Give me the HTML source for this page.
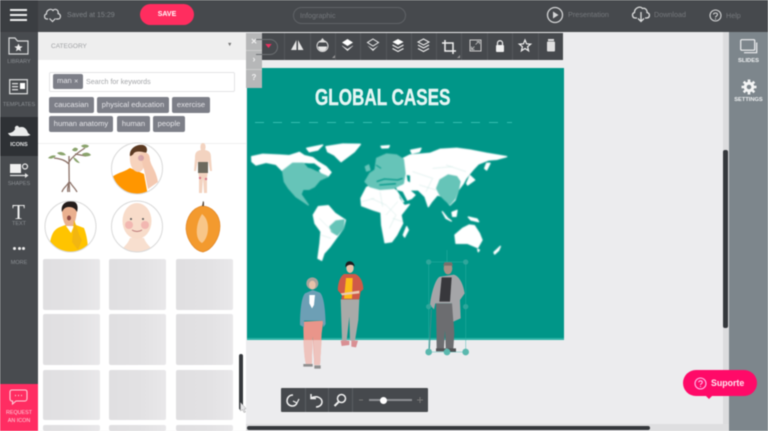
<!DOCTYPE html>
<html><head><meta charset="utf-8"><style>
html,body{margin:0;padding:0;width:768px;height:431px;overflow:hidden;background:#ececee}
#r{position:relative;width:768px;height:431px;overflow:hidden;filter:blur(.5px);font-family:"Liberation Sans",sans-serif}
#r div,#r svg{position:absolute}
.t{white-space:nowrap;line-height:1}
.lb{left:0;width:38px;text-align:center;font-size:5.500px;color:#8b8f93;white-space:nowrap;line-height:1}
.tag{background:#7d7f88;color:#e4e4e8;font-size:7.600px;height:16px;line-height:15px;text-align:center;border-radius:2px;white-space:nowrap}
.g{background:linear-gradient(90deg,#e0dfe1,#e3e2e4 60%,#e9e8ea);border-radius:2px;width:57px}
.sep{top:33px;width:1px;height:27px;background:#54575b}
</style></head><body><div id="r">

<!-- top bar -->
<div style="left:0;top:0;width:768px;height:32px;background:#46494d"></div>
<div style="left:0;top:0;width:38px;height:32px;background:#3b3e42"></div>
<div style="left:10px;top:9px;width:17px;height:2px;background:#eee"></div>
<div style="left:10px;top:14px;width:17px;height:2px;background:#eee"></div>
<div style="left:10px;top:19px;width:17px;height:2px;background:#eee"></div>
<svg style="left:43px;top:6px" width="19" height="17" viewBox="0 0 19 17" fill="none" stroke="#d8d9da" stroke-width="1.200"><path d="M5 13H4C1 13 .7 8.500 3.500 8 3 4 8 2 10 4.500 12 2 16 4 15 7.500 18.500 8.500 18 13 15 13H13"/><path d="M6.500 12.500 9.500 15.500 12.500 12.500"/></svg>
<div class="t" style="left:67px;top:11.500px;font-size:7.100px;color:#7f8387">Saved at 15:29</div>
<div class="t" style="left:140px;top:4px;width:54px;height:21px;background:#ff2d5f;border-radius:11px;color:#fff;font-size:7px;font-weight:bold;text-align:center;line-height:21px">SAVE</div>
<div class="t" style="left:293px;top:7px;width:111px;height:15px;border:1px solid #5f6266;border-radius:9px;color:#74777b;font-size:7.200px;line-height:15px;text-indent:6px">Infographic</div>
<svg style="left:546px;top:6px" width="18" height="18" viewBox="0 0 18 18"><circle cx="9" cy="9" r="7.500" fill="none" stroke="#d4d5d6" stroke-width="1.300"/><path d="M7 5.500 12.500 9 7 12.500Z" fill="#d4d5d6"/></svg>
<div class="t" style="left:568px;top:10.500px;font-size:7.300px;color:#75787c">Presentation</div>
<svg style="left:631px;top:5px" width="20" height="19" viewBox="0 0 20 19" fill="none" stroke="#dcdddd" stroke-width="1.300"><path d="M6 13H4.500C1 13 .5 8.500 3.500 7.500 3.500 3 9 .5 11.500 3.500 14 2.500 16.500 5 16 7.500 19.500 8.500 19 13 15.500 13H14"/><path d="M10 7V16M7 13.500 10 16.500 13 13.500"/></svg>
<div class="t" style="left:654px;top:10.500px;font-size:7.200px;color:#75787c">Download</div>
<svg style="left:709px;top:9px" width="13" height="13" viewBox="0 0 13 13" fill="none" stroke="#d4d5d6" stroke-width="1.100"><circle cx="6.500" cy="6.500" r="5.500"/><path d="M4.500 5.500C4.500 3.500 8.500 3.500 8.500 5.500 8.500 7 6.500 6.800 6.500 8.500"/><path d="M6.500 9.500V10.500"/></svg>
<div class="t" style="left:726px;top:11.500px;font-size:7.200px;color:#75787c">Help</div>

<!-- left sidebar -->
<div style="left:0;top:32px;width:38px;height:352px;background:#484b4f"></div>
<div style="left:0;top:117px;width:38px;height:39px;background:#2e3135"></div>
<svg style="left:8px;top:37px" width="21" height="18" viewBox="0 0 21 18"><path d="M1 1H7L9.500 4H20V17H1Z" fill="none" stroke="#d8d9da" stroke-width="1.200"/><path d="M10.500 6.500 11.700 9.300 14.700 9.500 12.300 11.400 13.100 14.300 10.500 12.700 7.900 14.300 8.700 11.400 6.300 9.500 9.300 9.300Z" fill="#eee"/></svg>
<div class="lb" style="top:59.500px">LIBRARY</div>
<svg style="left:9px;top:79px" width="19" height="16" viewBox="0 0 19 16"><rect x=".7" y=".7" width="17.600" height="14" fill="none" stroke="#e2e3e3" stroke-width="1.200"/><rect x="3" y="4" width="6" height="1.300" fill="#ddd"/><rect x="3" y="7" width="6" height="1.300" fill="#ddd"/><rect x="3" y="10" width="6" height="1.300" fill="#ddd"/><rect x="11" y="4" width="5" height="6" fill="#fff"/></svg>
<div class="lb" style="top:102.500px">TEMPLATES</div>
<svg style="left:7px;top:125px" width="24" height="13" viewBox="0 0 24 13"><path d="M1 8C4 8 6 7 7.500 5 9 3 12 2 15 2 18 2 20 5 21 8L23.500 10 20.500 11H5C3 11 2 10 1 8Z" fill="#eaebeb"/><circle cx="10" cy="3" r="2.200" fill="#eaebeb"/></svg>
<div class="lb" style="top:143px;color:#e2e3e4;font-weight:bold">ICONS</div>
<svg style="left:9px;top:163px" width="20" height="16" viewBox="0 0 20 16"><rect x="1" y="1" width="11" height="9" fill="#f0f0f0"/><circle cx="16" cy="3.500" r="2.500" fill="none" stroke="#e6e6e6" stroke-width="1.200"/><path d="M1 12.500H18" stroke="#e6e6e6" stroke-width="1.200"/><path d="M16 10 19.500 12.500 16 15Z" fill="#e6e6e6"/></svg>
<div class="lb" style="top:182px">SHAPES</div>
<div class="t" style="left:0;width:37px;top:200px;text-align:center;font:21px 'Liberation Serif',serif;color:#f0f0f0">T</div>
<div class="lb" style="top:222px">TEXT</div>
<div style="left:13px;top:247px;width:3px;height:3px;border-radius:2px;background:#eee"></div>
<div style="left:17.500px;top:247px;width:3px;height:3px;border-radius:2px;background:#eee"></div>
<div style="left:22px;top:247px;width:3px;height:3px;border-radius:2px;background:#eee"></div>
<div class="lb" style="top:261px">MORE</div>
<div style="left:0;top:384px;width:38px;height:47px;background:#ff2d62"></div>
<svg style="left:9px;top:389px" width="19" height="16" viewBox="0 0 19 16"><path d="M3 1H16C17.500 1 18 2 18 3V9.500C18 11 17 12 16 12H7L3.500 15V12H3C1.500 12 1 11 1 9.500V3C1 2 1.500 1 3 1Z" fill="none" stroke="#fbd3dc" stroke-width="1.100"/><path d="M6 6.500H7M9 6.500H10M12 6.500H13" stroke="#fbd3dc" stroke-width="1.200"/></svg>
<div class="lb" style="top:410.500px;color:#fbd3dc;font-size:5.400px">REQUEST</div>
<div class="lb" style="top:419px;color:#fbd3dc;font-size:5.400px">AN ICON</div>

<!-- panel -->
<div style="left:38px;top:33px;width:208px;height:398px;background:#fff"></div>
<div style="left:38px;top:33px;width:208px;height:27px;background:#eeeeee"></div>
<div class="t" style="left:51px;top:44px;font-size:6.500px;color:#a0a2a5">CATEGORY</div>
<div class="t" style="left:227px;top:43px;font-size:5.500px;color:#777">▼</div>
<div style="left:49px;top:72px;width:184px;height:18px;border:1px solid #e4e4e6;border-radius:2px;background:#fff"></div>
<div class="tag" style="left:53px;top:74px;width:30px;height:15px;text-align:left;text-indent:4px;line-height:14px">man <span style="font-size:5.500px">✕</span></div>
<div class="t" style="left:86px;top:78.500px;font-size:7.100px;color:#a3a5a8">Search for keywords</div>
<div class="tag" style="left:49px;top:97px;width:45px">caucasian</div>
<div class="tag" style="left:97px;top:97px;width:72px">physical education</div>
<div class="tag" style="left:172px;top:97px;width:38px">exercise</div>
<div class="tag" style="left:49px;top:116px;width:64px">human anatomy</div>
<div class="tag" style="left:117px;top:116px;width:33px">human</div>
<div class="tag" style="left:153px;top:116px;width:32px">people</div>
<div style="left:38px;top:143px;width:208px;height:1px;background:#efefef"></div>

<!-- tree -->
<svg style="left:45px;top:142px" width="50" height="52" viewBox="0 0 50 52" fill="none"><path d="M24.500 50C24 40 24 25 24 14M24 22C20 18 16 17 9 16M24 20C27 15 32 11 40 6M30 12 41 14M24 40C22 44 18 46 17 50M25 40C27 44 30 46 32 50M24 41C23 45 22 47 23 50" stroke="#8c7268" stroke-width="1.300"/><path d="M3 16C6 13 9 13 11 14 8 17 5 17 3 16ZM12 11C15 9 19 10 21 13 17 14 14 13 12 11ZM27 8C29 5 31 5 33 7 32 10 29 10 27 8ZM36 4C38 2 42 2 44 4 42 7 38 6 36 4ZM37 12C40 10 44 10 46 13 43 15 39 15 37 12ZM28 15C31 16 33 19 35 21 31 21 29 18 28 15Z" fill="#8aa36c"/></svg>

<!-- head circle 1 -->
<svg style="left:110px;top:142px" width="54" height="54" viewBox="0 0 54 54"><defs><clipPath id="c1"><circle cx="27" cy="26.500" r="25.500"/></clipPath></defs><circle cx="27" cy="26.500" r="25.500" fill="#fff"/><g clip-path="url(#c1)"><path d="M1 36C6 31 14 30 20 26L34 32 38 54H1Z" fill="#ff9600"/><path d="M20 10C19 20 21 29 28 30 34 30 35 22 36 14 34 8 24 6 20 10Z" fill="#f7d3bd"/><path d="M20 14C19 6 27 2 33 3 37 4 38 8 36 11 31 9 26 9 24 11 23 13 21 14 20 14Z" fill="#5c3a22"/><path d="M30 12C36 8 40 12 40 18 41 24 46 28 48 40L38 47C36 38 35 30 33 24Z" fill="#f4c9b1"/><circle cx="31" cy="16" r="3" fill="#c08aa0" opacity=".6"/></g><circle cx="27" cy="26.500" r="25.500" fill="none" stroke="#d9d9d9" stroke-width="1"/></svg>

<!-- body -->
<svg style="left:190px;top:142px" width="26" height="52" viewBox="0 0 26 52"><path d="M13 1C10 1 10 6 11 8 6 9 5 11 5 16L4 29 6 29 8 18 8 28 9 36 9 51 12 51 13 36 14 51 17 51 17 36 18 28 18 18 20 29 22 29 21 16C21 11 20 9 15 8 16 6 16 1 13 1Z" fill="#f3d3c0"/><rect x="8" y="20" width="10" height="11" fill="#6d6a5e"/><circle cx="10" cy="36" r="1.200" fill="#d9798a"/><circle cx="16" cy="37" r="1.200" fill="#d9798a"/></svg>

<!-- head circle 2 -->
<svg style="left:44px;top:200px" width="53" height="53" viewBox="0 0 53 53"><defs><clipPath id="c2"><circle cx="26.500" cy="26.500" r="25.500"/></clipPath></defs><circle cx="26.500" cy="26.500" r="25.500" fill="#fff"/><g clip-path="url(#c2)"><path d="M5 52C6 38 8 30 16 27L24 24 32 25 40 28C43 36 44 44 44 52Z" fill="#ffc400"/><path d="M18 8C18 18 20 26 25 28 29 28 32 22 33 10 30 3 20 3 18 8Z" fill="#eab08f"/><path d="M18 12C16 3 24 1 27 1 32 1 35 5 33 12 31 8 28 7 25 7 22 7 20 8 18 12Z" fill="#241d1b"/><path d="M22 26H30L27 33Z" fill="#fff"/><ellipse cx="25" cy="18" rx="2" ry="2.500" fill="#8c4a44"/><path d="M30 20C33 26 34 34 38 40L34 50 28 42Z" fill="#f2b611"/></g><circle cx="26.500" cy="26.500" r="25.500" fill="none" stroke="#d9d9d9" stroke-width="1"/></svg>

<!-- bald head -->
<svg style="left:110px;top:200px" width="54" height="53" viewBox="0 0 54 53"><defs><clipPath id="c3"><circle cx="27" cy="26.500" r="25.500"/></clipPath></defs><circle cx="27" cy="26.500" r="25.500" fill="#fff"/><g clip-path="url(#c3)"><path d="M10 52C14 46 18 44 20 38L34 38C36 44 40 46 44 52Z" fill="#f8dfcf"/><ellipse cx="27" cy="21" rx="14.500" ry="18" fill="#f8dcca"/><circle cx="19" cy="25" r="4" fill="#f0a6a6" opacity=".7"/><circle cx="35" cy="25" r="4" fill="#f0a6a6" opacity=".7"/><circle cx="21" cy="19" r="1" fill="#555"/><circle cx="33" cy="19" r="1" fill="#555"/><path d="M22 30C25 32 29 32 32 30" stroke="#b77" stroke-width="1" fill="none"/></g><circle cx="27" cy="26.500" r="25.500" fill="none" stroke="#d9d9d9" stroke-width="1"/></svg>

<!-- fruit -->
<svg style="left:184px;top:200px" width="38" height="54" viewBox="0 0 38 54"><path d="M18 6C8 8 2 18 2 29 3 41 11 51 19 52 28 50 36 38 36 26 36 15 28 6 18 6Z" fill="#f39a2e" stroke="#e0872a" stroke-width=".7"/><path d="M18 14C14 20 12 28 13 35 14 40 16 42 18 43 22 40 24 34 24 28 24 22 22 17 18 14Z" fill="#f8c689"/><path d="M18 6 19 1 20 2 20 6Z" fill="#5c4a3a"/></svg>

<!-- tiles -->
<div class="g" style="left:43px;top:259px;height:51px"></div><div class="g" style="left:109px;top:259px;height:51px"></div><div class="g" style="left:176px;top:259px;height:51px"></div>
<div class="g" style="left:43px;top:314px;height:51px"></div><div class="g" style="left:109px;top:314px;height:51px"></div><div class="g" style="left:176px;top:314px;height:51px"></div>
<div class="g" style="left:43px;top:370px;height:50px"></div><div class="g" style="left:109px;top:370px;height:50px"></div><div class="g" style="left:176px;top:370px;height:50px"></div>
<div class="g" style="left:43px;top:425px;height:6px"></div><div class="g" style="left:109px;top:425px;height:6px"></div><div class="g" style="left:176px;top:425px;height:6px"></div>
<div style="left:239px;top:354px;width:4px;height:56px;background:#35383c;border-radius:2px"></div>
<svg style="left:240px;top:402px" width="7" height="11" viewBox="0 0 7 11"><path d="M.5.5V9L2.500 7.500 4 10.500 5.500 10 4 7H6.500Z" fill="#e8e8ea" stroke="#999" stroke-width=".5"/></svg>

<!-- canvas -->
<div style="left:246px;top:60px;width:477px;height:366px;background:#ececee"></div>
<div style="left:247px;top:68px;width:317px;height:271px;background:#009688"></div>
<div style="left:247px;top:338px;width:317px;height:1.500px;background:#2db3a6"></div>
<div class="t" style="left:315px;top:86px;font-size:23.500px;font-weight:bold;color:#e4f5f3;transform-origin:0 0;transform:scaleX(.727);-webkit-text-stroke:.4px #e4f5f3">GLOBAL CASES</div>
<div style="left:255px;top:122px;width:257px;height:1px;background:repeating-linear-gradient(90deg,#35bdb0 0 9px,transparent 9px 18px)"></div>

<!-- map -->
<svg style="left:246px;top:135px;filter:blur(.4px)" width="270" height="140" viewBox="0 0 810 420">
<g fill="#fff" stroke="#fff" stroke-width="4" stroke-linejoin="round">
<path d="M17 65 50 58 100 60 130 62 160 52 175 62 200 68 215 80 240 95 255 112 245 125 225 112 205 85 175 82 140 85 110 108 90 88 60 82 30 90 18 80Z"/>
<path d="M240 35 290 27 343 28 325 50 285 80 265 60 245 50Z"/>
<path d="M182 40 230 30 215 45 190 50Z"/>
<path d="M405 34 430 32 427 38 408 39Z"/>
<path d="M494 46 525 40 520 50 498 55Z"/>
<path d="M472 70 492 60 527 57 552 55 582 43 632 40 672 45 722 55 782 65 752 73 727 75 697 87 682 103 672 115 660 130 652 145 637 165 627 195 612 210 604 200 592 185 574 180 557 200 547 215 537 185 517 165 492 165 472 150Z"/>
<path d="M722 85 732 85 722 105 716 100Z"/>
<path d="M452 157 472 150 507 180 497 190 472 200 462 180Z"/>
<path d="M345 190 362 157 375 152 402 165 440 160 455 170 460 190 475 212 490 208 465 240 470 265 452 300 437 320 417 323 407 270 405 232 382 225 347 212Z"/>
<path d="M202 240 217 215 247 212 267 235 298 255 292 280 270 310 252 335 234 355 227 376 216 370 222 325 225 290 207 265Z"/>
<path d="M627 300 650 280 670 270 685 272 700 295 708 315 695 338 665 325 630 325Z"/>
<path d="M744 352 763 334 758 346 746 357Z"/>
<path d="M472 300 482 275 487 285 476 306Z"/>
<path d="M589 230 605 250 616 258 600 250Z"/>
<path d="M618 232 633 226 630 244 620 244Z"/>
<path d="M667 246 693 252 698 260 675 255Z"/>
<path d="M672 122 686 135 665 150 662 145Z"/>
<path d="M695 343 700 345 697 350Z"/>
</g>
<g fill="#66c4b8" stroke="#66c4b8" stroke-width="4" stroke-linejoin="round">
<path d="M110 108 140 85 172 85 185 100 205 105 222 115 245 125 222 135 205 155 185 165 170 165 165 178 187 210 165 195 150 185 128 160 115 140Z"/>
<path d="M357 140 372 115 387 105 392 70 422 57 452 60 472 73 477 115 472 145 442 160 402 163 372 155Z"/>
<path d="M572 160 582 135 607 120 632 125 642 140 637 165 627 190 612 208 597 195 582 180Z"/>
<path d="M252 275 270 258 294 255 292 280 274 300 257 290Z"/>
<path d="M358 95 368 90 372 105 362 108Z"/>
</g>
<g fill="none" stroke="#c4e4e0" stroke-width="1.300"><path d="M375 190 420 210 450 240 430 280M402 170 410 215M455 200 420 240M347 200 385 190M220 250 260 290M225 300 255 310M500 110 560 130 540 170M600 90 660 110M440 250 470 260M520 150 570 165M560 100 620 95"/></g>
<g fill="none" stroke="#009688"><path d="M392 140 415 132 455 135 470 130M400 150 450 146" stroke-width="4"/><path d="M390 90 405 100" stroke-width="3"/></g>
<g fill="#009688"><path d="M175 85 205 85 225 100 215 110 195 100Z"/><path d="M172 165 205 165 215 180 190 195 175 185Z"/><path d="M452 165 470 170 488 205 475 200Z"/><path d="M482 120 492 122 492 142 485 138Z"/></g>
</svg>

<!-- people -->
<svg style="left:270px;top:250px" width="210" height="181" viewBox="0 0 630 543">
<path d="M100 215 C100 280 105 330 108 342 L125 342 L128 260 L133 345 L150 345 L155 250 L160 212Z" fill="#e9958a"/>
<path d="M100 270 C102 310 105 335 108 342 L125 342 L128 270ZM130 270 133 345 150 345 155 270Z" fill="#eec3bd"/>
<path d="M100 342H128V350H100ZM133 346H152V356H133Z" fill="#8f8f8f"/>
<path d="M105 130C95 140 90 180 90 225L102 232 102 212 158 212 160 232 167 222C166 180 162 140 150 128L128 120Z" fill="#6d9fb5"/>
<path d="M118 135 135 135 132 165 126 175 118 160Z" fill="#fff"/>
<circle cx="127" cy="100" r="18" fill="#a8a39c"/><ellipse cx="127" cy="105" rx="10" ry="13" fill="#e8c2a9"/>
<path d="M212 148 268 148 265 210 255 272 240 272 238 200 230 272 216 272Z" fill="#a9aaa8"/>
<path d="M212 272H238V285L215 288ZM244 272H264L258 292 244 290Z" fill="#d98f93"/>
<path d="M222 72C208 80 202 110 204 122L216 135 214 148 268 148 272 125 280 118C280 95 270 78 256 72Z" fill="#cf5a48"/>
<path d="M228 84H248L246 146H222Z" fill="#fdbb18"/>
<path d="M212 130 268 122 268 130 216 136Z" fill="#eccab0"/>
<ellipse cx="240" cy="54" rx="11" ry="15" fill="#e8c2a9"/><path d="M227 52C222 30 252 26 254 50 248 42 234 42 227 52Z" fill="#1e1c1f"/>
<path d="M498 160 548 160 553 250 550 296 527 296 525 240 522 296 500 296Z" fill="#6c6d70"/>
<path d="M498 295 H528 V304 H498ZM532 295 H558 V306 H532Z" fill="#525355"/>
<path d="M510 80C495 85 482 140 480 165L492 178 496 160 546 160 550 215 572 205 570 150 584 130C580 105 570 80 552 74Z" fill="#a5a5a8"/>
<path d="M515 82H545L540 155H508Z" fill="#38383c"/>
<ellipse cx="534" cy="55" rx="13" ry="18" fill="#a99085"/><path d="M519 47H549L545 36H524Z" fill="#77706c"/>
<path d="M484 178 478 300" stroke="#3f8f8d" stroke-width="3" fill="none"/>
<rect x="476" y="36" width="111" height="270" fill="none" stroke="#36b5aa" stroke-width="1.200"/>
<path d="M531 0V36" stroke="#36b5aa" stroke-width="1.200"/>
<g fill="#2fa69b"><circle cx="476" cy="36" r="8"/><circle cx="587" cy="36" r="8"/><circle cx="476" cy="170" r="8"/><circle cx="587" cy="170" r="8"/></g>
<g fill="#5ab8ae"><circle cx="476" cy="306" r="10"/><circle cx="531" cy="306" r="10"/><circle cx="587" cy="306" r="10"/></g>
</svg>

<!-- gray small column -->
<div style="left:246px;top:33px;width:16px;height:55px;background:#b6b7b8"></div>
<div class="t" style="left:246px;width:16px;text-align:center;top:38px;font-size:8px;color:#f0f0f0;font-weight:bold">✕</div>
<div style="left:246px;top:50px;width:16px;height:1px;background:#ccc"></div>
<div class="t" style="left:246px;width:16px;text-align:center;top:55px;font-size:9px;color:#f0f0f0;font-weight:bold">›</div>
<div style="left:246px;top:69px;width:16px;height:1px;background:#ccc"></div>
<div class="t" style="left:246px;width:16px;text-align:center;top:74px;font-size:8px;color:#f0f0f0;font-weight:bold">?</div>

<!-- toolbar -->
<div style="left:262px;top:33px;width:301px;height:27px;background:#46494d"></div>
<div style="left:256px;top:39px;width:21px;height:14px;border:1px solid #6c6f72;border-radius:0 8px 8px 0;border-left:0"></div>
<svg style="left:265px;top:44px" width="7" height="4" viewBox="0 0 8 5"><path d="M0 0H8L4 5Z" fill="#ec2f5f"/></svg>
<div class="sep" style="left:284px"></div><div class="sep" style="left:310px"></div><div class="sep" style="left:335px"></div><div class="sep" style="left:360px"></div><div class="sep" style="left:386px"></div><div class="sep" style="left:411px"></div><div class="sep" style="left:436px"></div><div class="sep" style="left:461px"></div><div class="sep" style="left:487px"></div><div class="sep" style="left:512px"></div><div class="sep" style="left:538px"></div>
<svg style="left:262px;top:33px" width="301" height="27" viewBox="0 0 301 27" fill="none">
<path d="M29 17 34.500 7V17ZM36 7 41.500 17H36Z" fill="#e6e6e6"/>
<circle cx="60.500" cy="13" r="5.500" stroke="#dcdcdc"/><path d="M60.500 5 57 9.500H64Z" fill="#dcdcdc"/><path d="M56 13.500H65A4.500 4.500 0 0 1 56 13.500Z" fill="#e6e6e6"/>
<path d="M85.500 6 91 9.500 85.500 13 80 9.500Z" fill="#fff"/><path d="M80 12.500 85.500 16 91 12.500 91 13 85.500 18 80 13Z" fill="#e6e6e6"/>
<path d="M111 6 116.500 9.500 111 13 105.500 9.500Z" stroke="#eee"/><path d="M105.500 12.500 111 16 116.500 12.500 111 18Z" fill="#e6e6e6"/>
<path d="M136 6 141.500 9 136 12 130.500 9Z" fill="#fff"/><path d="M130.500 12 136 15 141.500 12M130.500 15.500 136 18.500 141.500 15.500" stroke="#eee" stroke-width="1.200"/>
<path d="M161.500 6 167 9 161.500 12 156 9Z" stroke="#eee"/><path d="M156 12 161.500 15 167 12M156 15.500 161.500 18.500 167 15.500" stroke="#eee" stroke-width="1.200"/>
<path d="M183 7V18H194M180 10H191V21" stroke="#f0f0f0" stroke-width="1.500"/>
<rect x="208" y="7" width="11" height="11" stroke="#ccc"/><path d="M213.500 11.500 217 8.500M214.500 8.500H217.500V11M209.500 16.500 212.500 13.500M209.500 13.500V16.500H212.500" stroke="#ccc" stroke-width=".8"/>
<rect x="234" y="12" width="8" height="7" rx="1" fill="#f0f0f0"/><path d="M235.500 12V10C235.500 7 240.500 7 240.500 10V12" stroke="#f0f0f0" stroke-width="1.200"/>
<path d="M263 7 264.600 10.800 268.700 11.100 265.600 13.700 266.600 17.800 263 15.500 259.400 17.800 260.400 13.700 257.300 11.100 261.400 10.800Z" stroke="#f0f0f0" stroke-width="1.200"/>
<rect x="285" y="8.500" width="8" height="10" rx="1" fill="#e0e0e0"/><rect x="286" y="6" width="6" height="2" fill="#e0e0e0"/>
<path d="M73 22 70 25H73Z M198 22 195 25H198Z" fill="#999"/>
</svg>

<!-- scrollbars -->
<div style="left:723px;top:32px;width:6px;height:399px;background:#dcdcde"></div>
<div style="left:723px;top:150px;width:5px;height:178px;background:#35383c;border-radius:2px"></div>
<div style="left:246px;top:424px;width:483px;height:7px;background:#dedee0"></div>
<div style="left:247px;top:426px;width:403px;height:4px;background:#35383c;border-radius:2px"></div>

<!-- right sidebar -->
<div style="left:729px;top:32px;width:39px;height:399px;background:#7d868c"></div>
<svg style="left:740px;top:39px" width="18" height="15" viewBox="0 0 18 15" fill="none" stroke="#eff0f1" stroke-width="1.200"><rect x=".7" y=".7" width="14" height="10.500" rx="1"/><path d="M16.700 3.500V13.700H4"/></svg>
<div class="t" style="left:729px;width:39px;text-align:center;top:59px;font-size:5.800px;font-weight:bold;color:#eef0f1">SLIDES</div>
<svg style="left:741px;top:79px" width="16" height="16" viewBox="0 0 16 16"><circle cx="8" cy="8" r="3.800" fill="none" stroke="#f4f5f5" stroke-width="3"/><path d="M8 .5V3M8 13V15.500M.5 8H3M13 8H15.500M2.700 2.700 4.500 4.500M11.500 11.500 13.300 13.300M13.300 2.700 11.500 4.500M4.500 11.500 2.700 13.300" stroke="#f4f5f5" stroke-width="2.600"/></svg>
<div class="t" style="left:729px;width:39px;text-align:center;top:98px;font-size:5.700px;font-weight:bold;color:#eef0f1">SETTINGS</div>

<!-- zoom bar -->
<div style="left:281px;top:388px;width:147px;height:24px;background:#46494d;border-radius:1px"></div>
<div style="left:305px;top:388px;width:1px;height:24px;background:#5a5d61"></div>
<div style="left:328px;top:388px;width:1px;height:24px;background:#5a5d61"></div>
<div style="left:352px;top:388px;width:1px;height:24px;background:#5a5d61"></div>
<svg style="left:281px;top:388px" width="147" height="24" viewBox="0 0 147 24" fill="none" stroke="#f0f0f0" stroke-width="1.500"><path d="M12 7C8 7 6 10 6 13 6 16 8.500 18 11.500 18 13.500 18 15 17 16 15"/><path d="M12 13 16 15 18 11" stroke-width="1.200"/><path d="M30 10C36 7 41 10 41 14 41 17 38 19 35 19M30 6V10.500H35"/><circle cx="60.500" cy="10.500" r="4"/><path d="M57.500 14 53.500 18" stroke-width="2"/><path d="M78 12H82" stroke="#777" stroke-width="1"/><path d="M136 12H142M139 9V15" stroke="#777" stroke-width="1"/><path d="M88 12H131" stroke="#8d8f92" stroke-width="2"/></svg>
<div style="left:380px;top:397px;width:7px;height:7px;border-radius:50%;background:#fff"></div>

<!-- suporte -->
<div style="left:683px;top:370px;width:74px;height:26px;background:#ff0a68;border-radius:13px"></div>
<svg style="left:705px;top:395px" width="8" height="5" viewBox="0 0 8 5"><path d="M0 0H8L4 4Z" fill="#ff0a68"/></svg>
<svg style="left:694px;top:377px" width="13" height="13" viewBox="0 0 13 13" fill="none" stroke="#fbe" stroke-width="1.100"><circle cx="6.500" cy="6.500" r="5.500"/><path d="M4.700 5.300C4.700 3.300 8.300 3.300 8.300 5.300 8.300 6.800 6.500 6.600 6.500 8"/><path d="M6.500 9V10"/></svg>
<div class="t" style="left:711px;top:379px;font-size:8.800px;font-weight:bold;color:#fde6ef">Suporte</div>
</div></body></html>
